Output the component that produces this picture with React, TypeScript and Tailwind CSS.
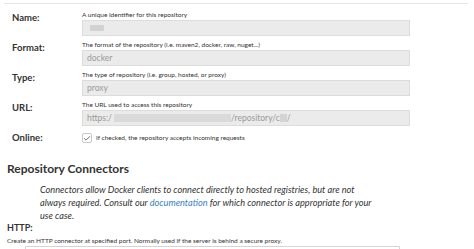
import { Check } from "lucide-react";

const font = { fontFamily: "Lato, 'Open Sans', Arial, sans-serif" };

// 表单行
function Field({ label, help, value }: { label: string; help: string; value: React.ReactNode }) {
  return (
    <div className="flex">
      <div className="w-[70px] shrink-0 pt-[2px] text-[9.5px] font-bold leading-[12px] text-[#333]">{label}</div>
      <div className="flex flex-col">
        <div className="h-[9px] text-[6.5px] leading-[9px] text-[#333] whitespace-nowrap">{help}</div>
        <div className="mt-[1px] flex h-[16px] w-[328px] items-center border border-[#dcdcdc] bg-[#ebebeb] px-[4px] text-[8.5px] text-[#9a9a9a]">
          {value}
        </div>
      </div>
    </div>
  );
}

function Blur({ w }: { w: number }) {
  return <span className="inline-block h-[6px] rounded-[1px] bg-[#d2d2d2]" style={{ width: w }} />;
}

export default function App() {
  return (
    <div className="h-[249px] w-[474px] overflow-hidden bg-white text-[#333]" style={font}>
      <div className="ml-[4px] mr-[6px] mt-[3px] border-t border-[#e6e6e6]" />
      <div className="flex flex-col gap-[4px] pl-[12px] pt-[6px]">
        <Field label="Name:" help="A unique identifier for this repository" value={<span className="ml-[3px]"><Blur w={14} /></span>} />
        <Field label="Format:" help="The format of the repository (i.e. maven2, docker, raw, nuget...)" value="docker" />
        <Field label="Type:" help="The type of repository (i.e. group, hosted, or proxy)" value="proxy" />
        <Field
          label="URL:"
          help="The URL used to access this repository"
          value={
            <span className="flex items-center">
              https:/
              <span className="ml-[2px] inline-block h-[8px] w-[117px] bg-[#dadada]" />
              /repository/c
              <span className="inline-block h-[8px] w-[7px] bg-[#d4d4d4]" />
              /
            </span>
          }
        />
        <div className="mt-[2px] flex items-center">
          <div className="w-[70px] shrink-0 text-[9.5px] font-bold leading-[12px]">Online:</div>
          <div className="flex h-[10px] w-[10px] items-center justify-center rounded-[2px] border border-[#c8c8c8] bg-white">
            <Check className="h-[9px] w-[9px] text-[#555]" strokeWidth={2.5} />
          </div>
          <span className="ml-[4px] text-[6.5px]">If checked, the repository accepts incoming requests</span>
        </div>
      </div>

      <div className="mt-[18px] pl-[7px] text-[12px] font-bold leading-[14px]">Repository Connectors</div>
      <p className="mt-[7px] w-[382px] pl-[40px] text-[9.2px] italic leading-[13px]">
        Connectors allow Docker clients to connect directly to hosted registries, but are not always required. Consult our{" "}
        <span className="text-[#3a7fc1]">documentation</span> for which connector is appropriate for your use case.
      </p>
      <div className="mt-[0px] pl-[7px] text-[9px] font-bold leading-[12px]">HTTP:</div>
      <div className="mt-[2px] pl-[7px] text-[6.5px] leading-[9px]">
        Create an HTTP connector at specified port. Normally used if the server is behind a secure proxy.
      </div>
      <div className="mt-[1px] flex items-start pl-[10px]">
        <div className="mt-[3px] h-[8px] w-[8px] border-l border-t border-[#bbb]" />
        <div className="ml-[7px] h-[16px] w-[375px] rounded-[1px] border border-[#d4d4d4] bg-white" />
      </div>
    </div>
  );
}
